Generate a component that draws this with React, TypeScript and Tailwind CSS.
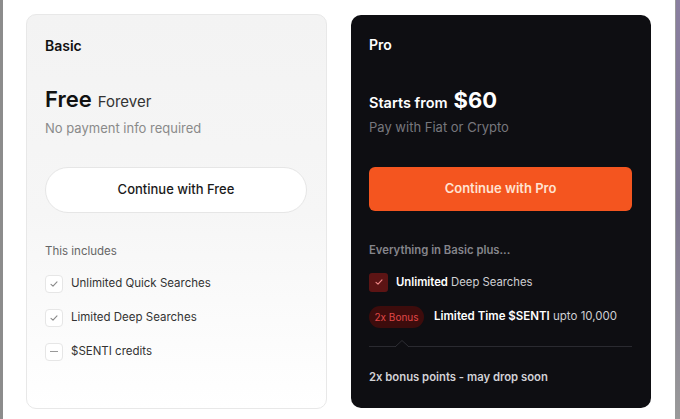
import React from "react";

function Check({ color }: { color: string }) {
  return (
    <svg width="10" height="10" viewBox="0 0 10 10" fill="none">
      <path d="M2 5.3 L4 7.2 L8 2.8" stroke={color} strokeWidth="1.1" strokeLinecap="round" strokeLinejoin="round" />
    </svg>
  );
}

export default function App() {
  return (
    <div
      className="w-[680px] h-[419px] bg-white flex overflow-hidden"
      style={{ fontFamily: "Inter, 'Noto Sans', sans-serif" }}
    >
      <div className="w-[3px] h-full bg-[#8c8c8c]" />
      <div className="flex-1 flex gap-[24px] pl-[23px] pt-[14px]">
        {/* Basic */}
        <div className="w-[301px] h-[395px] rounded-[10px] border border-[#e8e8e8] bg-gradient-to-b from-[#f3f3f3] via-[#f6f6f6] to-white px-[18px] pt-[21px] flex flex-col">
          <div className="text-[14px] leading-[20px] font-semibold text-[#111]">Basic</div>
          <div className="mt-[29px] flex items-baseline gap-[6px]">
            <span className="text-[22px] leading-[28px] font-semibold text-[#111]">Free</span>
            <span className="text-[15px] text-[#333]">Forever</span>
          </div>
          <div className="mt-[4px] text-[13px] leading-[20px] text-[#8a8a8a]">No payment info required</div>
          <div className="mt-[29px] w-[262px] h-[46px] rounded-full bg-white border border-[#e6e6e6] flex items-center justify-center text-[13px] font-medium text-[#1a1a1a]">
            Continue with Free
          </div>
          <div className="mt-[30px] text-[11.5px] leading-[16px] text-[#666]">This includes</div>
          <div className="mt-[16px] flex flex-col gap-[16px]">
            {["Unlimited Quick Searches", "Limited Deep Searches"].map((t) => (
              <div key={t} className="flex items-center gap-[8px] h-[18px]">
                <div className="w-[18px] h-[18px] rounded-[4px] border border-[#e6e6e6] bg-white flex items-center justify-center">
                  <Check color="#8a8a8a" />
                </div>
                <span className="text-[11.5px] text-[#333]">{t}</span>
              </div>
            ))}
            <div className="flex items-center gap-[8px] h-[18px]">
              <div className="w-[18px] h-[18px] rounded-[4px] border border-[#e6e6e6] bg-white flex items-center justify-center">
                <div className="w-[8px] h-[1.5px] bg-[#999]" />
              </div>
              <span className="text-[11.5px] text-[#333]">$SENTI credits</span>
            </div>
          </div>
        </div>

        {/* Pro */}
        <div className="w-[300px] h-[393px] mt-[1px] rounded-[10px] bg-[#0e0e12] px-[18px] pt-[20px] flex flex-col">
          <div className="text-[14px] leading-[20px] font-semibold text-white">Pro</div>
          <div className="mt-[31px] flex items-baseline gap-[6px]">
            <span className="text-[14.5px] font-semibold text-white">Starts from</span>
            <span className="text-[22px] leading-[28px] font-bold text-white">$60</span>
          </div>
          <div className="mt-[3px] text-[13px] leading-[20px] text-[#77777d]">Pay with Fiat or Crypto</div>
          <div className="mt-[30px] w-[263px] h-[44px] rounded-[6px] bg-[#f4551f] flex items-center justify-center text-[13px] font-semibold text-[#ffe3d2]">
            Continue with Pro
          </div>
          <div className="mt-[31px] text-[11.3px] leading-[16px] font-semibold text-[#85858b]">Everything in Basic plus...</div>
          <div className="mt-[15px] flex items-center gap-[8px] h-[18px]">
            <div className="w-[19px] h-[19px] rounded-[3px] bg-[#5c1414] flex items-center justify-center">
              <Check color="#f08a8a" />
            </div>
            <span className="text-[11.3px] text-[#cfcfd3]">
              <span className="font-semibold text-white">Unlimited</span> Deep Searches
            </span>
          </div>
          <div className="mt-[15px] flex items-center gap-[10px]">
            <div className="h-[22px] w-[55px] shrink-0 whitespace-nowrap rounded-full bg-[#3d0c0c] flex items-center justify-center text-[10px] text-[#e04848]">
              2x Bonus
            </div>
            <span className="whitespace-nowrap text-[11.5px] text-[#cfcfd3]">
              <span className="font-semibold text-white">Limited Time $SENTI</span> upto 10,000
            </span>
          </div>
          <div className="mt-[12px] relative h-[7px] w-[263px]">
            <div className="absolute left-0 right-0 bottom-0 h-[1px] bg-[#2a2a30]" />
            <svg className="absolute left-[26px] bottom-0" width="14" height="7" viewBox="0 0 14 7">
              <path d="M0 7 L7 0.5 L14 7" fill="#0e0e12" stroke="#2f2f35" strokeWidth="1" />
            </svg>
          </div>
          <div className="mt-[22px] text-[11.3px] font-semibold text-[#d2d2d6]">2x bonus points - may drop soon</div>
        </div>
      </div>
      <div className="w-[5px] h-full border-l border-[#9a9a9a] bg-gradient-to-b from-[#8a7fa0] via-[#7d7590] to-[#9a9a9a]" />
    </div>
  );
}
